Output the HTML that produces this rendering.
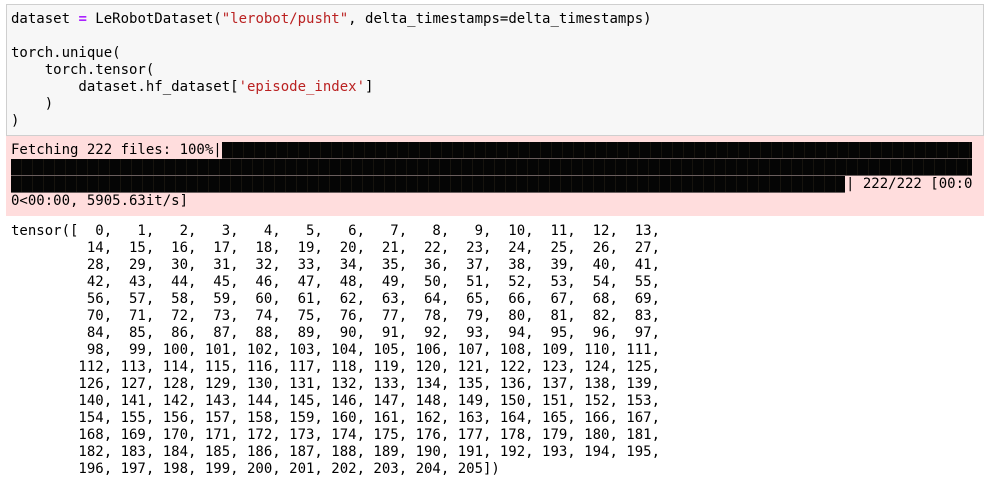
<!DOCTYPE html>
<html><head><meta charset="utf-8"><style>
body{margin:0;background:#fff;width:988px;height:481px;overflow:hidden}
pre{margin:0;font-family:"DejaVu Sans Mono","Liberation Mono",monospace;font-size:14px;line-height:17px;color:#000}
.cell{position:absolute;left:6px;top:4px;width:976px;height:130px;background:#f7f7f7;border:1px solid #cfcfcf}
.cell pre{position:absolute;left:4px;top:6px}
.s{color:#ba2121}.o{color:#aa22ff;font-weight:bold}
.err{position:absolute;left:6px;top:136px;width:978px;height:80px;background:#fdd}
.bar{position:absolute;background:#050505;background-image:repeating-linear-gradient(90deg,#050505 0,#050505 10px,#16130e 10px,#16130e 11px);border-bottom:1px solid #6a5e5e}
.t{position:absolute}
.out{position:absolute;left:11px;top:223px}
</style></head><body>
<div class="cell"><pre>dataset <span class="o">=</span> LeRobotDataset(<span class="s">"lerobot/pusht"</span>, delta_timestamps=delta_timestamps)

torch.unique(
    torch.tensor(
        dataset.hf_dataset[<span class="s">'episode_index'</span>]
    )
)</pre></div>
<div class="err">
<pre class="t" style="left:5px;top:6px">Fetching 222 files: 100%|</pre>
<div class="bar" style="left:216px;top:6px;width:750px;height:16px"></div>
<div class="bar" style="left:5px;top:23px;width:961px;height:16px"></div>
<div class="bar" style="left:5px;top:40px;width:834px;height:16px"></div>
<pre class="t" style="left:840px;top:40px">| 222/222 [00:0</pre>
<pre class="t" style="left:5px;top:57px">0&lt;00:00, 5905.63it/s]</pre>
</div>
<pre class="out">tensor([  0,   1,   2,   3,   4,   5,   6,   7,   8,   9,  10,  11,  12,  13,
         14,  15,  16,  17,  18,  19,  20,  21,  22,  23,  24,  25,  26,  27,
         28,  29,  30,  31,  32,  33,  34,  35,  36,  37,  38,  39,  40,  41,
         42,  43,  44,  45,  46,  47,  48,  49,  50,  51,  52,  53,  54,  55,
         56,  57,  58,  59,  60,  61,  62,  63,  64,  65,  66,  67,  68,  69,
         70,  71,  72,  73,  74,  75,  76,  77,  78,  79,  80,  81,  82,  83,
         84,  85,  86,  87,  88,  89,  90,  91,  92,  93,  94,  95,  96,  97,
         98,  99, 100, 101, 102, 103, 104, 105, 106, 107, 108, 109, 110, 111,
        112, 113, 114, 115, 116, 117, 118, 119, 120, 121, 122, 123, 124, 125,
        126, 127, 128, 129, 130, 131, 132, 133, 134, 135, 136, 137, 138, 139,
        140, 141, 142, 143, 144, 145, 146, 147, 148, 149, 150, 151, 152, 153,
        154, 155, 156, 157, 158, 159, 160, 161, 162, 163, 164, 165, 166, 167,
        168, 169, 170, 171, 172, 173, 174, 175, 176, 177, 178, 179, 180, 181,
        182, 183, 184, 185, 186, 187, 188, 189, 190, 191, 192, 193, 194, 195,
        196, 197, 198, 199, 200, 201, 202, 203, 204, 205])</pre>
</body></html>
